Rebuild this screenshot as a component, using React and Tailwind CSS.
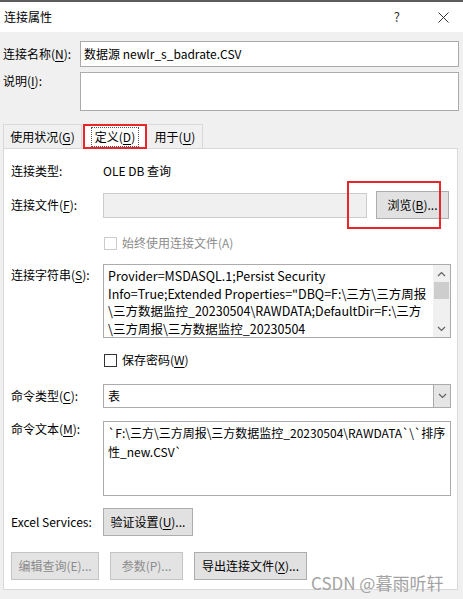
import React from 'react';

const U = ({ children }) => <span className="underline underline-offset-2">{children}</span>;

const Btn = ({ children, disabled, className = '' }) => (
  <div
    className={`h-[28px] flex items-center justify-center border ${
      disabled ? 'bg-[#e3e3e3] border-[#c4c4c4] text-[#8c8c8c]' : 'bg-[#e1e1e1] border-[#adadad] text-black'
    } ${className}`}
  >
    {children}
  </div>
);

const Check = ({ disabled }) => (
  <div className={`w-[13px] h-[13px] border bg-white ${disabled ? 'border-[#cccccc]' : 'border-[#333333]'}`} />
);

const Chevron = ({ up }) => (
  <svg width="9" height="6" viewBox="0 0 9 6" className={up ? 'rotate-180' : ''}>
    <path d="M1 1 L4.5 4.5 L8 1" fill="none" stroke="#606060" strokeWidth="1.2" />
  </svg>
);

const App = () => {
  return (
    <div className="w-[463px] h-[599px] bg-[#f0f0f0] font-['Noto_Sans_CJK_SC','Noto_Sans',sans-serif] text-[12px] leading-[16px] text-black overflow-hidden relative">
      <div className="h-[2px] bg-[#5c5c5c]" />

      {/* title bar */}
      <div className="h-[30px] bg-white flex items-center pl-[4px] pr-[14px]">
        <span className="flex-1">连接属性</span>
        <span className="text-[13px] text-[#333] mr-[38px]">?</span>
        <svg width="11" height="11" viewBox="0 0 11 11">
          <path d="M0.5 0.5 L10.5 10.5 M10.5 0.5 L0.5 10.5" stroke="#333" strokeWidth="1" />
        </svg>
      </div>

      <div className="px-[3px]">
        {/* name */}
        <div className="mt-[9px] flex items-center h-[26px]">
          <span className="w-[77px]">连接名称(<U>N</U>):</span>
          <div className="flex-1 h-[26px] bg-white border border-[#ababab] flex items-center pl-[3px] mr-[1px]">
            数据源 newlr_s_badrate.CSV
          </div>
        </div>
        {/* description */}
        <div className="mt-[5px] flex">
          <span className="w-[77px] pt-[1px]">说明(<U>I</U>):</span>
          <div className="flex-1 h-[39px] bg-white border border-[#ababab] mr-[1px]" />
        </div>

        {/* tabs */}
        <div className="mt-[13px] flex items-end h-[24px]">
          <div className="w-[79px] h-[24px] bg-[#f0f0f0] border border-b-0 border-[#d9d9d9] flex items-center justify-center">
            使用状况(<U>G</U>)
          </div>
          <div className="w-[64px] h-[25px] bg-white border-2 border-[#e8262b] border-b-2 flex items-center justify-center mx-[1px] mb-[-1px] relative z-10">
            <div className="border border-dotted border-[#555] px-[3px] leading-[18px]">
              定义(<U>D</U>)
            </div>
          </div>
          <div className="w-[55px] h-[24px] bg-[#f0f0f0] border border-b-0 border-l-0 border-[#d9d9d9] flex items-center justify-center">
            用于(<U>U</U>)
          </div>
        </div>

        {/* panel */}
        <div className="w-[455px] h-[442px] bg-white border border-[#d9d9d9] pl-[7px] pr-[6px] flex flex-col">
          <div className="mt-[10px] h-[24px] flex items-center">
            <span className="w-[92px]">连接类型:</span>
            <span>OLE DB 查询</span>
          </div>

          <div className="mt-[8px] h-[28px] flex items-center">
            <span className="w-[92px]">连接文件(<U>F</U>):</span>
            <div className="w-[264px] h-[25px] bg-[#f0f0f0] border border-[#cccccc]" />
            <div className="ml-[9px] relative">
              <Btn className="w-[73px]">
                浏览(<U>B</U>)...
              </Btn>
              <div className="absolute left-[-29px] top-[-10px] w-[94px] h-[48px] border-2 border-[#e8262b]" />
            </div>
          </div>

          <div className="mt-[14px] h-[20px] flex items-center pl-[93px] text-[#8c8c8c]">
            <Check disabled />
            <span className="ml-[5px]">始终使用连接文件(A)</span>
          </div>

          <div className="mt-[11px] flex">
            <span className="w-[92px] pt-[3px]">连接字符串(<U>S</U>):</span>
            <div className="w-[348px] h-[74px] border border-[#ababab] bg-white flex">
              <div className="flex-1 pl-[4px] pt-[2px] text-[12.5px] leading-[17.5px] whitespace-nowrap overflow-hidden">
                <div>Provider=MSDASQL.1;Persist Security</div>
                <div>Info=True;Extended Properties="DBQ=F:\三方\三方周报</div>
                <div>\三方数据监控_20230504\RAWDATA;DefaultDir=F:\三方</div>
                <div>\三方周报\三方数据监控_20230504</div>
              </div>
              <div className="w-[17px] bg-[#f0f0f0] flex flex-col items-center">
                <div className="h-[17px] flex items-center justify-center">
                  <Chevron up />
                </div>
                <div className="w-[15px] h-[17px] bg-[#cdcdcd]" />
                <div className="flex-1" />
                <div className="h-[17px] flex items-center justify-center">
                  <Chevron />
                </div>
              </div>
            </div>
          </div>

          <div className="mt-[12px] h-[20px] flex items-center pl-[93px]">
            <Check />
            <span className="ml-[5px]">保存密码(<U>W</U>)</span>
          </div>

          <div className="mt-[14px] h-[24px] flex items-center">
            <span className="w-[92px]">命令类型(<U>C</U>):</span>
            <div className="w-[348px] h-[24px] border border-[#ababab] bg-white flex">
              <div className="flex-1 flex items-center pl-[4px]">表</div>
              <div className="w-[17px] bg-[#e5e5e5] border-l border-[#ababab] flex items-center justify-center">
                <Chevron />
              </div>
            </div>
          </div>

          <div className="mt-[13px] flex">
            <span className="w-[92px]">命令文本(<U>M</U>):</span>
            <div className="w-[348px] h-[75px] border border-[#ababab] bg-white pl-[4px] pt-[1px] leading-[19px] whitespace-nowrap overflow-hidden">
              <div>`F:\三方\三方周报\三方数据监控_20230504\RAWDATA`\`排序</div>
              <div>性_new.CSV`</div>
            </div>
          </div>

          <div className="mt-[12px] h-[28px] flex items-center">
            <span className="w-[92px]">Excel Services:</span>
            <Btn className="w-[90px]">
              验证设置(<U>U</U>)...
            </Btn>
          </div>

          <div className="mt-[16px] flex gap-[11px]">
            <Btn disabled className="w-[88px]">编辑查询(E)...</Btn>
            <Btn disabled className="w-[73px]">参数(P)...</Btn>
            <Btn className="w-[113px]">
              导出连接文件(<U>X</U>)...
            </Btn>
          </div>
        </div>
      </div>

      <div className="absolute left-[311px] top-[572px] text-[17px] leading-[22px] text-[#a3a3a3] whitespace-nowrap">
        CSDN @暮雨听轩
      </div>
    </div>
  );
};

export default App;
